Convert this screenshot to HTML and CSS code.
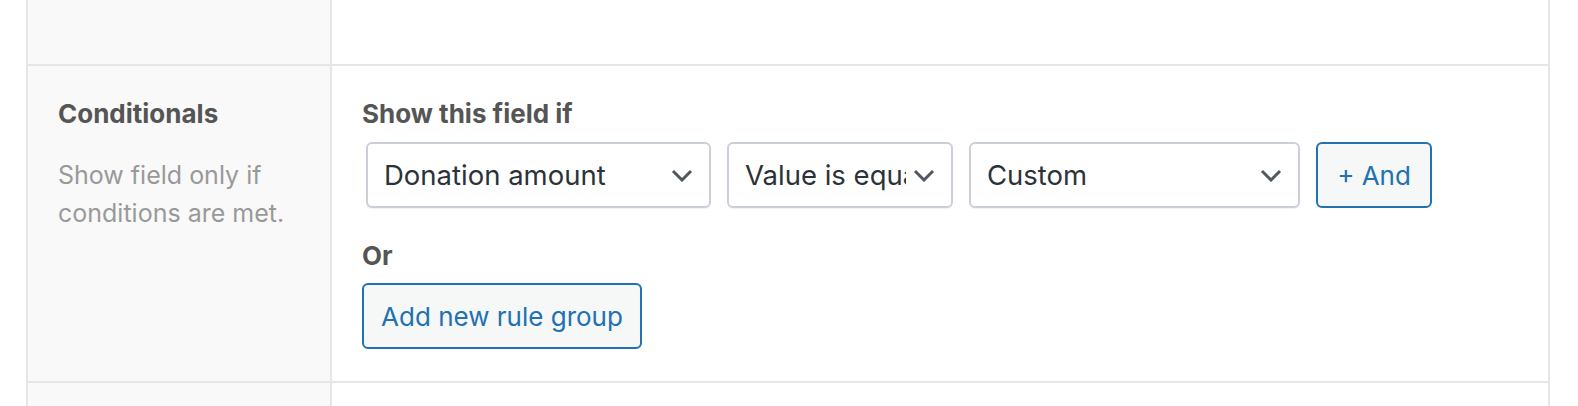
FILE: index.html
```html
<!DOCTYPE html>
<html lang="en">
<head>
<meta charset="utf-8">
<title>Conditionals</title>
<link rel="stylesheet" href="styles.css">
</head>
<body>
<div class="table">
  <div class="row row-top">
    <div class="cell-label"></div>
    <div class="cell-content"></div>
  </div>
  <div class="row">
    <div class="cell-label">
      <h3 class="label-title">Conditionals</h3>
      <p class="label-desc">Show field only if conditions are met.</p>
    </div>
    <div class="cell-content">
      <div class="group-title">Show this field if</div>
      <div class="rule">
        <div class="select select-field">
          <span class="select-text">Donation amount</span>
          <svg class="chevron" width="22" height="13" viewBox="0 0 22 13"><polyline points="2,2 11,11 20,2" fill="none" stroke="currentColor" stroke-width="3"/></svg>
        </div>
        <div class="select select-op">
          <span class="select-text">Value is equal to</span>
          <svg class="chevron" width="22" height="13" viewBox="0 0 22 13"><polyline points="2,2 11,11 20,2" fill="none" stroke="currentColor" stroke-width="3"/></svg>
        </div>
        <div class="select select-value">
          <span class="select-text">Custom</span>
          <svg class="chevron" width="22" height="13" viewBox="0 0 22 13"><polyline points="2,2 11,11 20,2" fill="none" stroke="currentColor" stroke-width="3"/></svg>
        </div>
        <button class="btn btn-and" type="button">+ And</button>
      </div>
      <div class="group-title or-title">Or</div>
      <button class="btn btn-group" type="button">Add new rule group</button>
    </div>
  </div>
  <div class="row row-bottom">
    <div class="cell-label"></div>
    <div class="cell-content"></div>
  </div>
</div>
</body>
</html>
```

FILE: styles.css
```css
* { box-sizing: border-box; }

html, body {
  margin: 0;
  padding: 0;
  background: #ffffff;
  font-family: Inter, "Noto Sans", "Liberation Sans", sans-serif;
  overflow: hidden;
}

.table {
  margin-left: 26px;
  width: 1524px;
  border-left: 2px solid #e6e6e6;
  border-right: 2px solid #e6e6e6;
}

.row {
  display: grid;
  grid-template-columns: 304px 1fr;
  border-bottom: 2px solid #e6e6e6;
}

.row-top { height: 66px; }
.row-bottom { height: 23px; border-bottom: none; }

.cell-label {
  background: #f9f9f9;
  border-right: 2px solid #e6e6e6;
  padding: 30px 30px;
}

.cell-content {
  background: #ffffff;
  padding: 30px 30px 32px 30px;
}

.row-top .cell-label,
.row-top .cell-content,
.row-bottom .cell-label,
.row-bottom .cell-content { padding: 0; }

.label-title {
  margin: 0;
  font-size: 26px;
  line-height: 36px;
  font-weight: 700;
  color: #555555;
}

.label-desc {
  margin: 24px 0 0 0;
  font-size: 25px;
  line-height: 38px;
  font-weight: 400;
  color: #999999;
}

.group-title {
  font-size: 26px;
  line-height: 36px;
  font-weight: 700;
  color: #555555;
}

.or-title { margin-top: 30px; }

.rule {
  display: flex;
  gap: 16px;
  margin-top: 10px;
  padding-left: 4px;
}

.select {
  display: flex;
  align-items: center;
  height: 66px;
  border: 2px solid #cbcfd8;
  border-radius: 6px;
  background: #ffffff;
  padding: 0 16px 0 16px;
  box-shadow: 0 1px 1px rgba(0, 0, 0, 0.05);
  color: #50575e;
}

.select-field { width: 345px; }
.select-op { width: 226px; }
.select-value { width: 331px; }

.select-text {
  flex: 1;
  min-width: 0;
  overflow: hidden;
  white-space: nowrap;
  font-size: 27.5px;
  color: #2c3338;
  margin-right: 7px;
}

.chevron { flex: none; display: block; }

.btn {
  font-family: inherit;
  font-size: 26px;
  color: #2271b1;
  background: #f6f7f7;
  border: 2px solid #2271b1;
  border-radius: 6px;
  height: 66px;
  padding: 0 21px;
  cursor: pointer;
}

.btn-and { width: 116px; padding: 0; }
.btn-group { margin-top: 9px; width: 280px; padding: 0; }
```
